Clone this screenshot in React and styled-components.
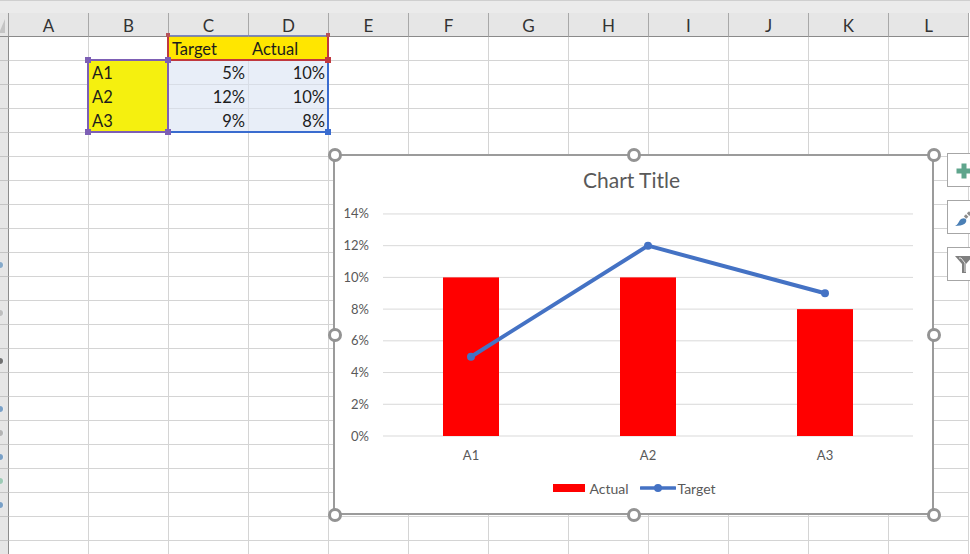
import React from 'react'
import styled, { createGlobalStyle } from 'styled-components'

const COLUMNS = ['A', 'B', 'C', 'D', 'E', 'F', 'G', 'H', 'I', 'J', 'K', 'L']
const ROW_COUNT = 22
const ROW_MARKS = { 9: '#6f9cc4', 11: '#b5b5b5', 13: '#555555', 15: '#5f8fc0', 16: '#a8a8a8', 17: '#5f8fc0', 18: '#8cc4a8', 19: '#5f8fc0' }

const CONTENT = {
  '0-2': { text: 'Target', fill: 'header' },
  '0-3': { text: 'Actual', fill: 'header' },
  '1-1': { text: 'A1', fill: 'label' },
  '2-1': { text: 'A2', fill: 'label' },
  '3-1': { text: 'A3', fill: 'label' },
  '1-2': { text: '5%', fill: 'data', right: true },
  '1-3': { text: '10%', fill: 'data', right: true },
  '2-2': { text: '12%', fill: 'data', right: true },
  '2-3': { text: '10%', fill: 'data', right: true },
  '3-2': { text: '9%', fill: 'data', right: true },
  '3-3': { text: '8%', fill: 'data', right: true },
}

const FILLS = { header: '#ffe600', label: '#f5f00f', data: '#e8eef8' }
const LINES = { header: '#ffe600', label: '#f5f00f', data: '#d8dde6' }

const chartData = [
  { name: 'A1', x: 471, target: 5, actual: 10 },
  { name: 'A2', x: 648, target: 12, actual: 10 },
  { name: 'A3', x: 825, target: 9, actual: 8 },
]
const yFor = (v) => 436 - v * 15.86
const TICKS = [0, 2, 4, 6, 8, 10, 12, 14]

const GlobalStyle = createGlobalStyle`
  html, body { margin: 0; padding: 0; background: #fff; }
  body { width: 970px; height: 554px; overflow: hidden; font-family: Lato, "Liberation Sans", sans-serif; }
`

const Page = styled.div`
  position: relative;
  width: 970px;
  height: 554px;
  overflow: hidden;
`

const TopStrip = styled.div`
  height: 13px;
  background: #ebebeb;
  border-top: 1px solid #cfcfcf;
  box-sizing: border-box;
`

const Sheet = styled.div`
  display: grid;
  grid-template-columns: 9px repeat(12, 80px);
  grid-auto-rows: 24px;
`

const Corner = styled.div`
  background: #e6e6e6;
  border-right: 1px solid #9c9c9c;
  border-bottom: 1px solid #8a8a8a;
  box-sizing: border-box;
  display: flex;
  align-items: flex-end;
  padding-bottom: 3px;
  &::before {
    content: '';
    border-style: solid;
    border-width: 0 0 14px 6px;
    border-color: transparent transparent #c4c4c4 transparent;
    margin-left: -1px;
  }
`

const ColumnHeader = styled.div`
  background: #e6e6e6;
  border-right: 1px solid #a8a8a8;
  border-bottom: 1px solid #8a8a8a;
  box-sizing: border-box;
  display: flex;
  align-items: center;
  justify-content: center;
  font-size: 17px;
  color: #333;
  padding-top: 1px;
`

const RowHeader = styled.div`
  grid-column: 1;
  grid-row: ${({ $row }) => $row};
  background: #e6e6e6;
  border-right: 1px solid #8c8c8c;
  border-bottom: 1px solid #c4c4c4;
  box-sizing: border-box;
  display: flex;
  align-items: center;
`

const RowMark = styled.span`
  width: 3px;
  height: 6px;
  border-radius: 0 3px 3px 0;
  background: ${({ $color }) => $color};
  box-shadow: 1px 0 2px #eef3f8;
  opacity: 0.8;
`

const Cell = styled.div`
  grid-column: ${({ $col }) => $col};
  grid-row: ${({ $row }) => $row};
  box-sizing: border-box;
  border-right: 1px solid ${({ $fill }) => ($fill ? LINES[$fill] : '#d4d4d4')};
  border-bottom: 1px solid ${({ $fill }) => ($fill ? LINES[$fill] : '#d4d4d4')};
  background: ${({ $fill }) => ($fill ? FILLS[$fill] : '#fff')};
  display: flex;
  align-items: center;
  justify-content: ${({ $right }) => ($right ? 'flex-end' : 'flex-start')};
  padding: 0 3px;
  font-size: 16.5px;
  color: #1c1c1c;
`

const Range = styled.div`
  grid-column: ${({ $cols }) => $cols};
  grid-row: ${({ $rows }) => $rows};
  position: relative;
  margin: -2px 0 0 -2px;
  border: 2px solid ${({ $color }) => $color};
  border-top-color: ${({ $top, $color }) => $top || $color};
  border-top-width: ${({ $top }) => ($top ? '1px' : '2px')};
  z-index: ${({ $z }) => $z};
  pointer-events: none;
`

const RangeHandle = styled.span`
  position: absolute;
  width: ${({ $size }) => $size}px;
  height: ${({ $size }) => $size}px;
  background: ${({ $color }) => $color};
  ${({ $h, $size }) => `${$h}: ${-2 - $size / 2 + 1}px;`}
  ${({ $v, $size }) => `${$v}: ${-2 - $size / 2 + 1}px;`}
`

const Chart = styled.div`
  position: absolute;
  left: 333px;
  top: 154px;
  width: 601px;
  height: 361px;
  box-sizing: border-box;
  background: #fff;
  border: 2px solid #9b9b9b;
  display: flex;
  flex-direction: column;
  z-index: 5;
`

const ChartTitle = styled.div`
  height: 44px;
  padding: 9px 4px 0 0;
  box-sizing: border-box;
  text-align: center;
  font-size: 21px;
  line-height: 30px;
  color: #595959;
`

const Plot = styled.svg`
  display: block;
  width: 597px;
  height: 270px;
  text {
    font-family: Lato, "Liberation Sans", sans-serif;
    font-size: 13px;
    fill: #595959;
  }
`

const Legend = styled.div`
  display: flex;
  align-items: center;
  justify-content: center;
  height: 22px;
  margin-top: 7px;
  padding-left: 2px;
  font-size: 14px;
  color: #595959;
`

const LegendItem = styled.div`
  display: flex;
  align-items: center;
  gap: ${({ $gap }) => $gap}px;
  margin-left: ${({ $offset }) => $offset || 0}px;
`

const Swatch = styled.span`
  width: 32px;
  height: 8px;
  background: #ff0000;
`

const SizeHandle = styled.span`
  position: absolute;
  width: 14px;
  height: 14px;
  box-sizing: border-box;
  border: 3px solid #939393;
  border-radius: 50%;
  background: #fff;
  left: ${({ $x }) => $x - 7}px;
  top: ${({ $y }) => $y - 7}px;
  z-index: 6;
`

const ChartTools = styled.div`
  position: absolute;
  left: 947px;
  top: 153px;
  display: flex;
  flex-direction: column;
  gap: 13px;
  z-index: 6;
`

const ToolButton = styled.div`
  width: 40px;
  height: 34px;
  box-sizing: border-box;
  border: 1px solid #a6a6a6;
  background: #fff;
  svg { display: block; }
`

const HANDLE_SPOTS = [
  [335, 155], [634, 155], [934, 155],
  [335, 335], [934, 335],
  [335, 515], [634, 515], [934, 515],
]

const CORNERS = [['left', 'top'], ['right', 'top'], ['left', 'bottom'], ['right', 'bottom']]

function App() {
  const rows = []
  for (let r = 0; r < ROW_COUNT; r++) {
    rows.push(
      <RowHeader key={'h' + r} $row={r + 2}>{ROW_MARKS[r] && <RowMark $color={ROW_MARKS[r]} />}</RowHeader>
    )
    COLUMNS.forEach((c, i) => {
      const cell = CONTENT[r + '-' + i]
      rows.push(
        <Cell key={r + c} $row={r + 2} $col={i + 2} $fill={cell && cell.fill} $right={cell && cell.right}>
          {cell && cell.text}
        </Cell>
      )
    })
  }

  const linePoints = chartData.map((d) => d.x + ',' + yFor(d.target)).join(' ')

  return (
    <Page>
      <GlobalStyle />
      <TopStrip />
      <Sheet>
        <Corner />
        {COLUMNS.map((c) => <ColumnHeader key={c}>{c}</ColumnHeader>)}
        {rows}

        {/* selection ranges of the chart source */}
        <Range $cols="4 / 6" $rows="2 / 3" $color="#c0383f" $top="#7a86c4" $z={2}>
          <RangeHandle $h="left" $v="top" $size={4} $color="#b5525a" />
          <RangeHandle $h="right" $v="top" $size={4} $color="#b5525a" />
          <RangeHandle $h="right" $v="bottom" $size={6} $color="#c0383f" />
        </Range>
        <Range $cols="4 / 6" $rows="3 / 6" $color="#3a6ccf" $z={1}>
          <RangeHandle $h="right" $v="bottom" $size={6} $color="#3a6ccf" />
        </Range>
        <Range $cols="3 / 4" $rows="3 / 6" $color="#7d5fb5" $z={3}>
          {CORNERS.map(([h, v]) => (
            <RangeHandle key={h + v} $h={h} $v={v} $size={6} $color="#7d5fb5" />
          ))}
        </Range>
      </Sheet>

      <Chart>
        <ChartTitle>Chart Title</ChartTitle>
        <Plot viewBox="335 200 597 270">
          {TICKS.map((t) => (
            <g key={t}>
              <line x1="383" x2="913" y1={yFor(t)} y2={yFor(t)} stroke="#d9d9d9" strokeWidth="1" />
              <text x="369" y={yFor(t) + 4.5} textAnchor="end">{t}%</text>
            </g>
          ))}
          {chartData.map((d) => (
            <rect key={d.name} x={d.x - 28} y={yFor(d.actual)} width="56" height={436 - yFor(d.actual)} fill="#ff0000" />
          ))}
          <polyline points={linePoints} fill="none" stroke="#4472c4" strokeWidth="4" strokeLinejoin="round" strokeLinecap="round" />
          {chartData.map((d) => (
            <circle key={d.name} cx={d.x} cy={yFor(d.target)} r="4" fill="#4472c4" />
          ))}
          {chartData.map((d) => (
            <text key={d.name} x={d.x} y="460" textAnchor="middle">{d.name}</text>
          ))}
        </Plot>
        <Legend>
          <LegendItem $gap={4}>
            <Swatch />
            Actual
          </LegendItem>
          <LegendItem $gap={1} $offset={12}>
            <svg width="36" height="10" viewBox="0 0 36 10">
              <line x1="1" x2="35" y1="5" y2="5" stroke="#4472c4" strokeWidth="3.5" strokeLinecap="round" />
              <circle cx="18" cy="5" r="4" fill="#4472c4" />
            </svg>
            Target
          </LegendItem>
        </Legend>
      </Chart>

      {HANDLE_SPOTS.map(([x, y]) => <SizeHandle key={x + '-' + y} $x={x} $y={y} />)}

      <ChartTools>
        <ToolButton>
          <svg width="38" height="32" viewBox="0 0 38 32">
            <path d="M8.5 14.500h5v-5h5v5h5v5h-5v5h-5v-5h-5z" fill="#5fa58c" />
          </svg>
        </ToolButton>
        <ToolButton>
          <svg width="38" height="32" viewBox="0 0 38 32">
            <path d="M7 25c2.500-1 3.500-4 5-6 1.500-1.800 4-2.500 5.500-1.200 1.300 1.200 1 3.500-.8 5-2.200 1.800-6 2.200-9.700 2.200z" fill="#4a7fb5" />
            <path d="M17 16.500l8-7.500" stroke="#8c8c8c" strokeWidth="3.500" strokeDasharray="3 1.200" />
          </svg>
        </ToolButton>
        <ToolButton>
          <svg width="38" height="32" viewBox="0 0 38 32">
            <path d="M7 8h18l-7 8v9h-4v-9z" fill="#7f7f7f" />
            <path d="M11 10h2l4 5v9" stroke="#e4e4e4" strokeWidth="1" fill="none" />
          </svg>
        </ToolButton>
      </ChartTools>
    </Page>
  )
}

export default App
